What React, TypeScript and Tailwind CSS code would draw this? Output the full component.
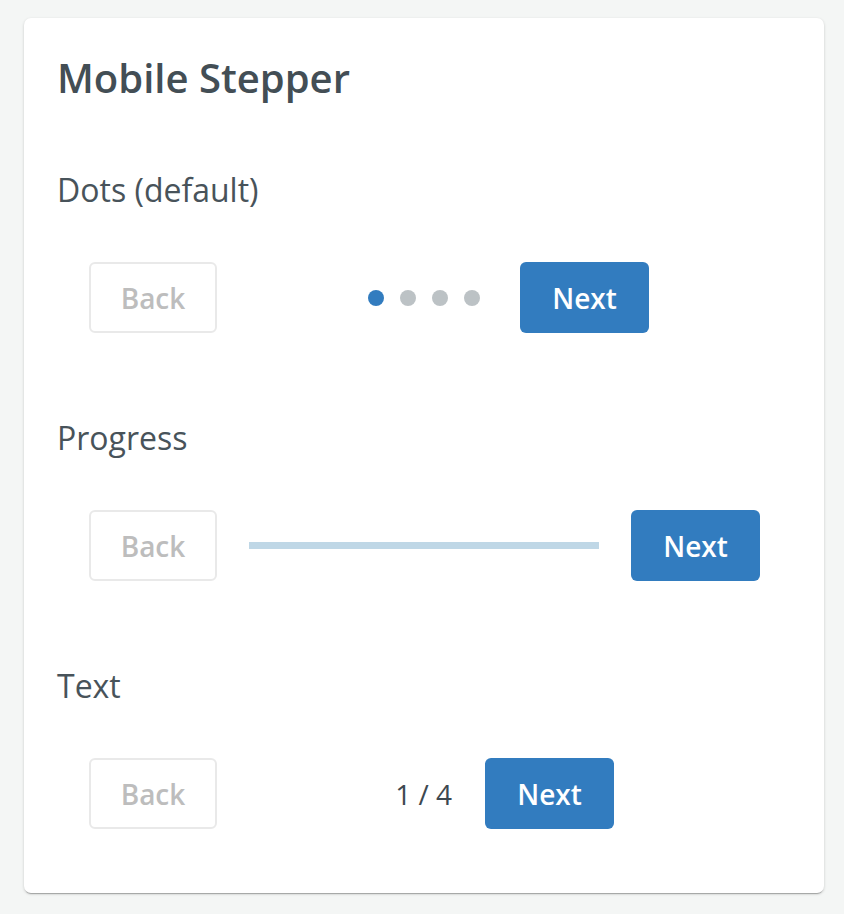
import React from 'react';

const font = { fontFamily: '"Open Sans", "Noto Sans", sans-serif' };

function BackButton() {
  return (
    <button
      disabled
      className="w-[128px] h-[71px] shrink-0 rounded-[6px] border-2 border-[#e9e9e9] bg-white text-[28px] font-semibold text-[#bdbdbd] leading-none">
      Back
    </button>);

}

function NextButton() {
  return (
    <button className="w-[129px] h-[71px] shrink-0 rounded-[6px] bg-[#327cbf] text-[28px] font-semibold text-white leading-none">
      Next
    </button>);

}

function Label({ children }: {children: React.ReactNode;}) {
  return <h3 className="text-[32px] leading-[36px] font-normal text-[#48535a]">{children}</h3>;
}

export default function App() {
  return (
    <div className="min-h-[914px] bg-[#f4f6f5] pt-[18px] pl-[24px]" style={font}>
      <div className="w-[800px] rounded-[7px] bg-white px-[33px] pt-[36px] pb-[64px] shadow-[0_1px_3px_rgba(0,0,0,0.18),0_2px_1px_-1px_rgba(0,0,0,0.25)]">
        <h2 className="text-[40px] leading-[48px] font-semibold text-[#434e55]">Mobile Stepper</h2>

        <div className="mt-[70px]">
          <Label>Dots (default)</Label>
          <div className="mt-[54px] flex items-center pl-[32px]">
            <BackButton />
            <div className="flex w-[303px] justify-end pr-[40px]">
              <div className="flex gap-[16px]">
                {[0, 1, 2, 3].map((i) =>
                <span
                  key={i}
                  className={
                  i === 0 ?
                  'block h-[16px] w-[16px] rounded-full bg-[#327cbf]' :
                  'block h-[16px] w-[16px] rounded-full bg-[#bcc2c5]'
                  } />

                )}
              </div>
            </div>
            <NextButton />
          </div>
        </div>

        <div className="mt-[87px]">
          <Label>Progress</Label>
          <div className="mt-[54px] flex items-center pl-[32px]">
            <BackButton />
            <div className="mx-[32px] h-[7px] w-[350px] bg-[#bfd7e6]" />
            <NextButton />
          </div>
        </div>

        <div className="mt-[87px]">
          <Label>Text</Label>
          <div className="mt-[54px] flex items-center pl-[32px]">
            <BackButton />
            <div className="flex w-[268px] justify-end pr-[33px]">
              <span className="text-[28px] font-medium text-[#3d4850]">1 / 4</span>
            </div>
            <NextButton />
          </div>
        </div>
      </div>
    </div>);

}
